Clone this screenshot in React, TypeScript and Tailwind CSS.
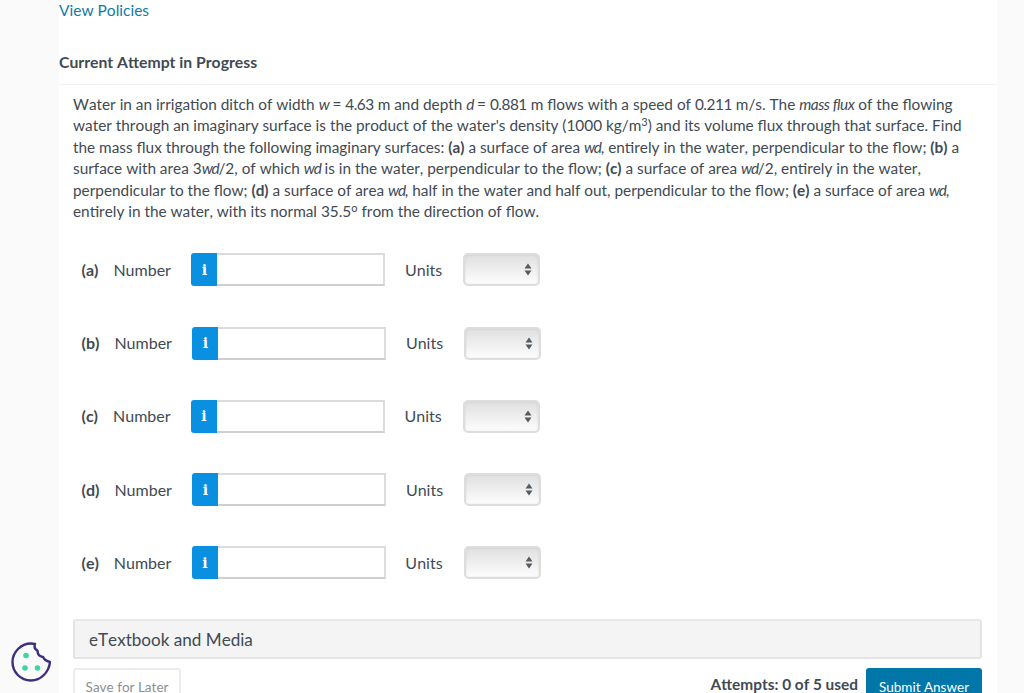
const parts = ["(a)", "(b)", "(c)", "(d)", "(e)"];

function CookieIcon() {
  return (
    <svg width="40" height="40" viewBox="0 0 40 40" fill="none">
      <path
        d="M24 2c-1 3 0 5.500 2.500 6.500 0 3.500 2 6 5.500 6.500 1 2.500 3.500 4 7 5-1 10-9 18.500-19 18.500C9.500 38.500 1.500 30 1.500 20 1.500 10 10 1.500 20 1.500c1.500 0 2.700.200 4 .500Z"
        stroke="#3b2f7e"
        strokeWidth="2.400"
        strokeLinejoin="round"
      />
      <circle cx="15" cy="13.500" r="2.800" fill="#3dd6a0" />
      <circle cx="14" cy="26" r="2.800" fill="#3dd6a0" />
      <circle cx="26.500" cy="26" r="2.800" fill="#3dd6a0" />
    </svg>
  );
}

function Num({ children }: { children: string }) {
  return <span className="tracking-[-0.03em]">{children}</span>;
}

function Var({ children }: { children: string }) {
  return <i className="tracking-[-0.08em]">{children}</i>;
}

function AnswerRow({ label }: { label: string }) {
  return (
    <div className="flex h-[33px] items-center text-[16px] text-[#3f4a54]">
      <span className="font-bold">{label}</span>
      <span className="ml-[15px]">Number</span>
      <div className="ml-[20.500px] flex h-[33px] w-[194px]">
        <div className="flex w-[26px] items-center justify-center rounded-l-[3px] bg-[#0a90e0] pt-px font-['DejaVu_Serif',serif] text-[14px] font-bold text-white">
          i
        </div>
        <div className="flex-1 border-2 border-l-0 border-[#dcdcdc] border-b-[#cfcfcf] bg-white" />
      </div>
      <span className="ml-[19.500px]">Units</span>
      <div className="ml-[21px] flex h-[33px] w-[77px] items-center justify-end rounded-[5px] border-2 border-[#dddddd] bg-gradient-to-b from-[#e0e0e0] to-[#fdfdfd] pr-[6px] shadow-[inset_0_0_3px_rgba(0,0,0,0.08)]">
        <svg width="8" height="13" viewBox="0 0 8 13" fill="#555b60">
          <path d="M4 0.500 7.500 5.500H.500Z" />
          <path d="M4 12.500.500 7.500H7.500Z" />
        </svg>
      </div>
    </div>
  );
}

export default function App() {
  return (
    <div className="relative flex h-[693px] overflow-hidden bg-[#fafafa] font-['Lato',sans-serif] [font-kerning:none]">
      <div className="w-[59px] shrink-0" />
      <main className="w-[938px] shrink-0 bg-white">
        <a className="block pt-px text-[15.500px] leading-[19px] text-[#0f7ba8]">View Policies</a>
        <h2 className="mt-[31px] border-b border-[#f2f2f2] pb-[11px] text-[15.750px] leading-[22px] font-bold text-[#3f4a54]">
          Current Attempt in Progress
        </h2>
        <div className="px-[14px]">
          <p className="mt-[9px] w-[900px] text-[15.350px] leading-[21.400px] text-[#3f4a54]">
            Water in an irrigation ditch of width <Var>w</Var> = <Num>4.63</Num> m and depth <Var>d</Var> ={" "}
            <Num>0.881</Num> m flows with a speed of <Num>0.211</Num> m/s. The{" "}
            <i className="tracking-[-0.03em]">mass flux</i> of the flowing water through an imaginary surface is the
            product of the water's density (1000 kg/m<sup className="text-[11px] leading-none">3</sup>) and its volume
            flux through that surface. Find the mass flux through the following imaginary surfaces: <b>(a)</b> a surface
            of area <Var>wd</Var>, entirely in the water, perpendicular to the flow; <b>(b)</b> a surface with area 3
            <Var>wd</Var>/2, of which <Var>wd</Var> is in the water, perpendicular to the flow; <b>(c)</b> a surface of
            area <Var>wd</Var>/2, entirely in the water, perpendicular to the flow; <b>(d)</b> a surface of area{" "}
            <Var>wd</Var>, half in the water and half out, perpendicular to the flow; <b>(e)</b> a surface of area{" "}
            <Var>wd</Var>, entirely in the water, with its normal 35.5<sup className="text-[11px] leading-none">o</sup>{" "}
            from the direction of flow.
          </p>
          <div className="mt-[31px] flex flex-col gap-[40.250px] pl-[8.500px]">
            {parts.map((part) => (
              <AnswerRow key={part} label={part} />
            ))}
          </div>
          <div className="mt-[40px] flex h-[40px] w-[909px] items-center rounded-[3px] border-2 border-[#e4e4e4] border-t-[#e8e8e8] bg-[#f4f4f4] pl-[14px] text-[17.100px] text-[#3f4a54]">
            eTextbook and Media
          </div>
          <div className="mt-[9px] flex w-[909px] items-start justify-between">
            <button className="h-[40px] w-[108px] rounded-[3px] border-2 border-[#ececec] bg-white pb-[2px] text-[13.500px] text-[#8b8f93]">
              Save for Later
            </button>
            <div className="flex items-start">
              <span className="mt-[5px] text-[15.400px] font-bold text-[#3f4a54]">Attempts: 0 of 5 used</span>
              <button className="ml-[8px] h-[40px] w-[116px] rounded-[3px] bg-[#0077a8] pb-[2px] text-[13.500px] text-white">
                Submit Answer
              </button>
            </div>
          </div>
        </div>
      </main>
      <div className="absolute bottom-[11px] left-[11px]">
        <CookieIcon />
      </div>
    </div>
  );
}
